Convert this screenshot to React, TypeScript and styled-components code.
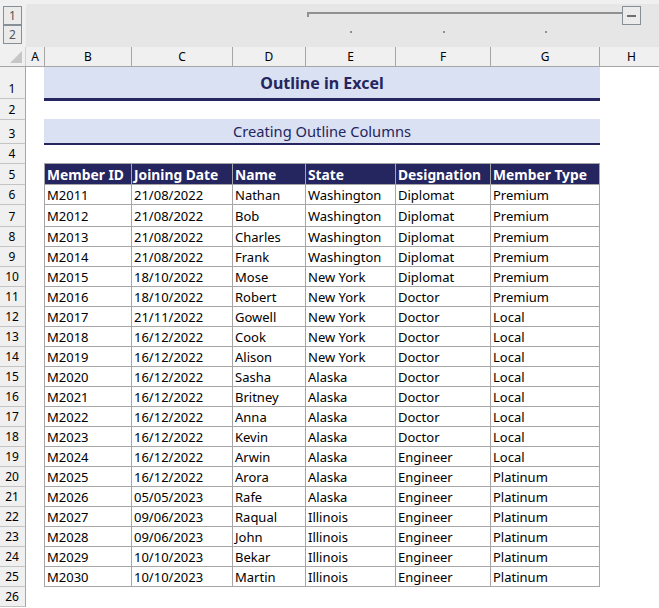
import React from 'react';
import styled, { createGlobalStyle } from 'styled-components';

const GRID = '26px 19px 87px 101px 73px 90px 95px 109px 63px';
const LINE = '#a6a6a6';
const NAVY = '#25255f';
const BAND = '#d9e1f2';

const GlobalStyle = createGlobalStyle`
  html, body {
    margin: 0;
    height: 100%;
    overflow: hidden;
    background: #fff;
  }
  body {
    font-family: "Noto Sans", "Open Sans", sans-serif;
    color: #000;
  }
`;

const Sheet = styled.div`
  width: 659px;
  height: 608px;
  overflow: hidden;
  background: #fff;
`;

const OutlineBar = styled.div`
  display: grid;
  grid-template-columns: ${GRID};
  height: 47px;
  box-sizing: border-box;
  padding-top: 4px;
  background: #f0f0f0;
`;

const LevelButtons = styled.div`
  display: flex;
  flex-direction: column;
  align-items: flex-start;
  padding: 2px 0 0 3px;
  background: #f0f0f0;
`;

const OutlineButton = styled.div`
  box-sizing: border-box;
  width: 19px;
  height: 19px;
  display: flex;
  align-items: center;
  justify-content: center;
  border: 1px solid #868e96;
  background: #ebebeb;
  font-size: 12px;
  color: #555;
`;

const OutlineFill = styled.div<{ $first?: boolean }>`
  background: #e6e6e6;
  position: relative;
  display: flex;
  justify-content: center;
  border-top-left-radius: ${p => (p.$first ? '3px' : '0')};
`;

const Dot = styled.span`
  width: 2px;
  height: 2px;
  margin-top: 27px;
  background: #909090;
`;

const Bracket = styled.div`
  position: absolute;
  left: 1px;
  right: 0;
  top: 8px;
  height: 5px;
  border-top: 2px solid #909090;
  border-left: 2px solid #909090;
  box-sizing: border-box;
`;

const BracketRun = styled.div`
  position: absolute;
  left: 0;
  right: 0;
  top: 8px;
  height: 2px;
  background: #909090;
`;

const CollapseCell = styled(OutlineFill)`
  justify-content: flex-start;
  padding: 2px 0 0 22px;
`;

const BracketTail = styled.div`
  position: absolute;
  left: 0;
  width: 22px;
  top: 8px;
  height: 2px;
  background: #909090;
`;

const Minus = styled.span`
  width: 9px;
  height: 2px;
  background: #6e6e6e;
`;

const ColumnHeaders = styled.div`
  display: grid;
  grid-template-columns: ${GRID};
  height: 20px;
  box-sizing: border-box;
  background: #f0f0f0;
  border-bottom: 1px solid ${LINE};
`;

const Corner = styled.div`
  border-right: 1px solid #d0d0d0;
  display: flex;
  align-items: flex-end;
  justify-content: flex-end;
  padding: 0 3px 3px 0;
`;

const ColumnHead = styled.div`
  display: flex;
  align-items: center;
  justify-content: center;
  border-right: 1px solid ${LINE};
  font-size: 12px;
  line-height: 1;
  &:last-child {
    border-right: none;
  }
`;

const Row = styled.div<{ $height: number }>`
  display: grid;
  grid-template-columns: ${GRID};
  height: ${p => p.$height}px;
`;

const RowHead = styled.div`
  grid-column: 1;
  box-sizing: border-box;
  display: flex;
  align-items: flex-end;
  justify-content: center;
  padding-right: 1px;
  padding-bottom: 1px;
  background: #f0f0f0;
  border-right: 1px solid ${LINE};
  border-bottom: 1px solid #c4c4c4;
  font-size: 12px;
  line-height: 17px;
`;

const Banner = styled.div<{ $strong?: boolean }>`
  grid-column: 3 / 9;
  margin-left: -1px;
  margin-right: 0;
  margin-top: ${p => (p.$strong ? 0 : -1)}px;
  height: calc(100% + 2px);
  box-sizing: border-box;
  display: flex;
  align-items: center;
  justify-content: center;
  background: ${BAND};
  border-bottom: ${p => (p.$strong ? 3 : 2)}px solid ${NAVY};
  color: ${NAVY};
  font-size: ${p => (p.$strong ? 16 : 14.7)}px;
  font-weight: ${p => (p.$strong ? 700 : 400)};
  position: relative;
`;

const Cell = styled.div<{ $head?: boolean; $lead?: boolean }>`
  box-sizing: border-box;
  display: flex;
  align-items: center;
  padding-left: 2px;
  white-space: nowrap;
  border-right: 1px solid ${LINE};
  border-bottom: 1px solid ${LINE};
  font-size: ${p => (p.$head ? 13.8 : 13)}px;
  background: ${p => (p.$head ? NAVY : '#fff')};
  color: ${p => (p.$head ? '#fff' : '#000')};
  font-weight: ${p => (p.$head ? 700 : 400)};
  ${p => p.$head && `margin-top: -1px; border-top: 1px solid ${LINE};`}
  ${p =>
    p.$lead &&
    `margin-left: -1px; border-left: 1px solid ${LINE};`}
`;

const columns = ['A', 'B', 'C', 'D', 'E', 'F', 'G', 'H'];
const heads = ['Member ID', 'Joining Date', 'Name', 'State', 'Designation', 'Member Type'];

const members = [
  ['M2011', '21/08/2022', 'Nathan', 'Washington', 'Diplomat', 'Premium', 20],
  ['M2012', '21/08/2022', 'Bob', 'Washington', 'Diplomat', 'Premium', 22],
  ['M2013', '21/08/2022', 'Charles', 'Washington', 'Diplomat', 'Premium', 20],
  ['M2014', '21/08/2022', 'Frank', 'Washington', 'Diplomat', 'Premium', 20],
  ['M2015', '18/10/2022', 'Mose', 'New York', 'Diplomat', 'Premium', 20],
  ['M2016', '18/10/2022', 'Robert', 'New York', 'Doctor', 'Premium', 20],
  ['M2017', '21/11/2022', 'Gowell', 'New York', 'Doctor', 'Local', 20],
  ['M2018', '16/12/2022', 'Cook', 'New York', 'Doctor', 'Local', 20],
  ['M2019', '16/12/2022', 'Alison', 'New York', 'Doctor', 'Local', 20],
  ['M2020', '16/12/2022', 'Sasha', 'Alaska', 'Doctor', 'Local', 20],
  ['M2021', '16/12/2022', 'Britney', 'Alaska', 'Doctor', 'Local', 20],
  ['M2022', '16/12/2022', 'Anna', 'Alaska', 'Doctor', 'Local', 20],
  ['M2023', '16/12/2022', 'Kevin', 'Alaska', 'Doctor', 'Local', 20],
  ['M2024', '16/12/2022', 'Arwin', 'Alaska', 'Engineer', 'Local', 20],
  ['M2025', '16/12/2022', 'Arora', 'Alaska', 'Engineer', 'Platinum', 20],
  ['M2026', '05/05/2023', 'Rafe', 'Alaska', 'Engineer', 'Platinum', 20],
  ['M2027', '09/06/2023', 'Raqual', 'Illinois', 'Engineer', 'Platinum', 20],
  ['M2028', '09/06/2023', 'John', 'Illinois', 'Engineer', 'Platinum', 20],
  ['M2029', '10/10/2023', 'Bekar', 'Illinois', 'Engineer', 'Platinum', 20],
  ['M2030', '10/10/2023', 'Martin', 'Illinois', 'Engineer', 'Platinum', 20],
] as const;

const App: React.FC = () => (
  <Sheet>
    <GlobalStyle />
    <OutlineBar>
      <LevelButtons>
        <OutlineButton>1</OutlineButton>
        <OutlineButton>2</OutlineButton>
      </LevelButtons>
      <OutlineFill $first />
      <OutlineFill />
      <OutlineFill />
      <OutlineFill />
      <OutlineFill>
        <Bracket />
        <Dot />
      </OutlineFill>
      <OutlineFill>
        <BracketRun />
        <Dot />
      </OutlineFill>
      <OutlineFill>
        <BracketRun />
        <Dot />
      </OutlineFill>
      <CollapseCell>
        <BracketTail />
        <OutlineButton>
          <Minus />
        </OutlineButton>
      </CollapseCell>
    </OutlineBar>

    <ColumnHeaders>
      <Corner>
        <svg width="12" height="12" viewBox="0 0 12 12">
          <path d="M12 0V12H0Z" fill="#c6c6c6" />
        </svg>
      </Corner>
      {columns.map(c => (
        <ColumnHead key={c}>{c}</ColumnHead>
      ))}
    </ColumnHeaders>

    <Row $height={32}>
      <RowHead>1</RowHead>
      <Banner $strong>Outline in Excel</Banner>
    </Row>
    <Row $height={21}>
      <RowHead>2</RowHead>
    </Row>
    <Row $height={24}>
      <RowHead>3</RowHead>
      <Banner>Creating Outline Columns</Banner>
    </Row>
    <Row $height={20}>
      <RowHead>4</RowHead>
    </Row>
    <Row $height={21}>
      <RowHead>5</RowHead>
      <span />
      {heads.map((h, i) => (
        <Cell key={h} $head $lead={i === 0}>
          {h}
        </Cell>
      ))}
    </Row>
    {members.map((m, r) => (
      <Row key={m[0]} $height={m[6]}>
        <RowHead>{r + 6}</RowHead>
        <span />
        {m.slice(0, 6).map((v, i) => (
          <Cell key={i} $lead={i === 0}>
            {v}
          </Cell>
        ))}
      </Row>
    ))}
    <Row $height={20}>
      <RowHead>26</RowHead>
    </Row>
  </Sheet>
);

export default App;
